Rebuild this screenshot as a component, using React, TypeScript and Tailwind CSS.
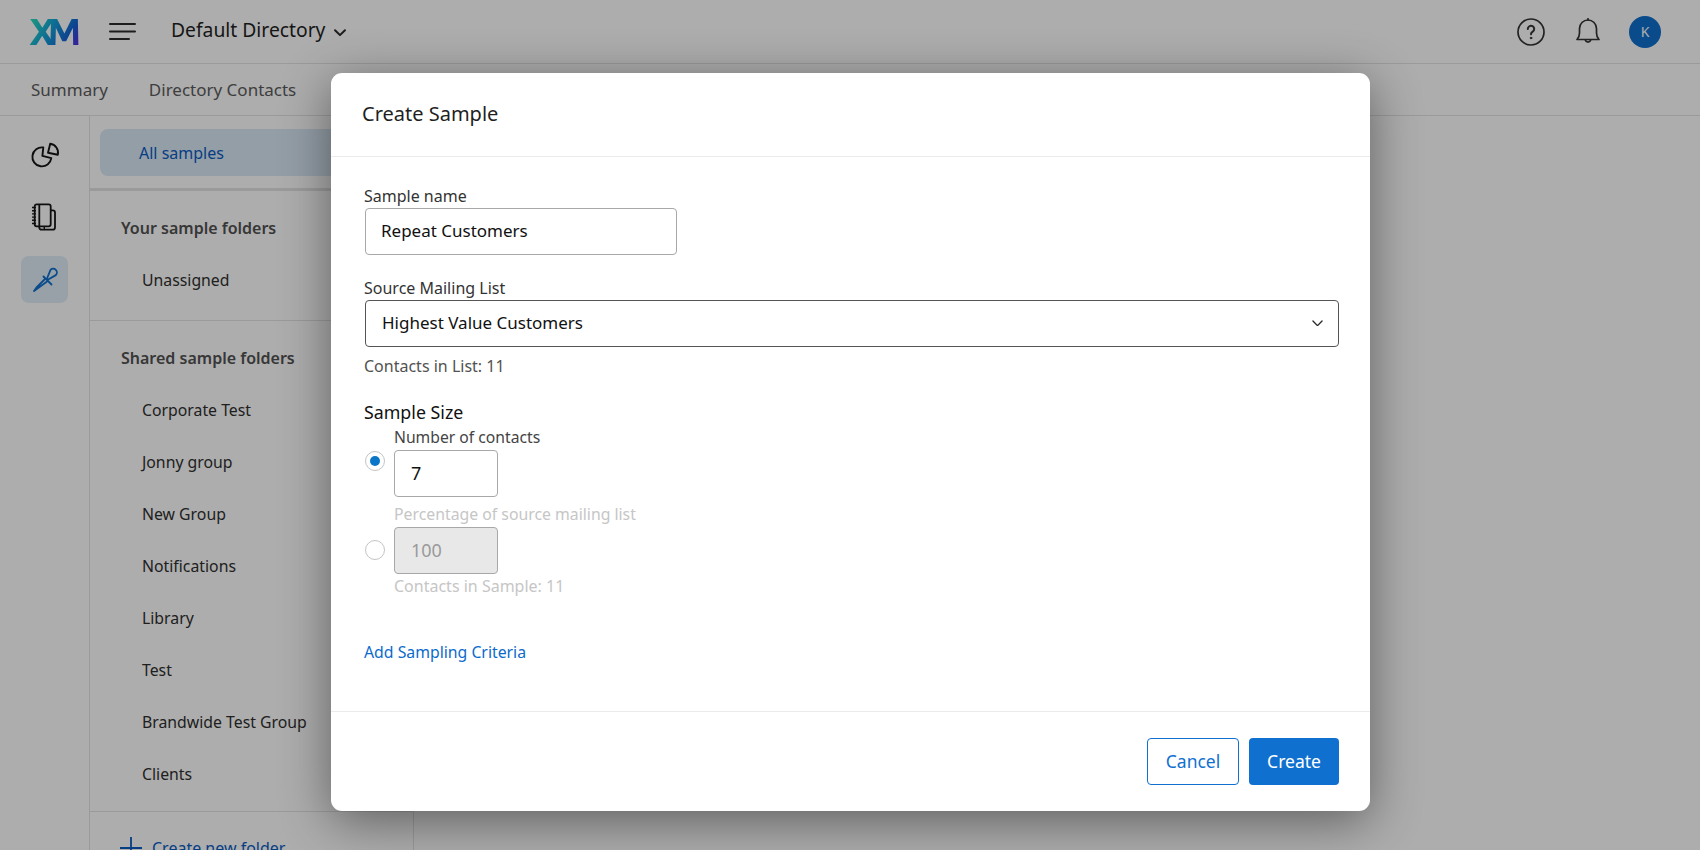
import React from "react";

const font = { fontFamily: '"Noto Sans", sans-serif' };

function Logo() {
  return (
    <svg width="50" height="28" viewBox="0 0 48 27" className="shrink-0 -ml-[1px]">
      <defs>
        <linearGradient id="lg" gradientUnits="userSpaceOnUse" x1="2" y1="0" x2="47" y2="27">
          <stop offset="0" stopColor="#2be0bc" />
          <stop offset="0.4" stopColor="#14a4d8" />
          <stop offset="0.75" stopColor="#1464d4" />
          <stop offset="1" stopColor="#5a2ae8" />
        </linearGradient>
      </defs>
      <polygon points="1,1 7.500,1 12.800,9.500 18,1 24,1 16,13.200 24.800,26 18,26 12.600,17.200 7,26 0.500,26 9.500,13.200" fill="url(#lg)" />
      <polygon points="21,1 27,1 34,15 41,1 47,1 47.500,26 42.500,26 42.200,9.500 35.700,22.500 32,22.500 25.800,9.500 25.400,26 20.500,26 21,8" fill="url(#lg)" />
    </svg>
  );
}

function Hamburger() {
  return (
    <svg width="27" height="19" viewBox="0 0 27 19" fill="none" stroke="#2b2b2b" strokeWidth="2" strokeLinecap="round">
      <path d="M1 2h25M1 9.500h25M1 17h19" />
    </svg>
  );
}

function PieIcon() {
  return (
    <svg width="40" height="40" viewBox="0 0 40 40" fill="none" stroke="#161616" strokeWidth="1.900" strokeLinejoin="round" className="-ml-[2px]">
      <path d="M19.300 13.500A9.500 9.500 0 1 0 27.300 24.200L18.400 21.800Z" />
      <path d="M26.200 9.800A9 9 0 0 1 33.800 20.700L24 18.700Z" />
    </svg>
  );
}

function NotebookIcon() {
  return (
    <svg width="40" height="40" viewBox="0 0 40 40" fill="none" stroke="#161616" strokeWidth="1.800" strokeLinejoin="round" className="-ml-[1px]">
      <rect x="10.700" y="7.300" width="16" height="22" rx="2" />
      <path d="M15.300 7.300v22" />
      <path d="M26.700 13.300h2.100a2.200 2.200 0 0 1 2.200 2.200v15a2.200 2.200 0 0 1-2.200 2.200H17.500a2.200 2.200 0 0 1-2.200-2.200v-1.200" />
      <path d="M20.300 29.300v3.400" strokeWidth="1.400" />
      <path d="M8 10.500h4M8 13.700h4M8 16.900h4M8 20.100h4M8 23.300h4M8 26.500h4" strokeWidth="1.400" />
    </svg>
  );
}

function DropperIcon() {
  return (
    <svg width="40" height="40" viewBox="0 0 40 40" fill="none" stroke="#0f6fcf" strokeWidth="1.800" strokeLinejoin="round" strokeLinecap="round">
      <path d="M18.500 16.500L26.500 24.500" />
      <path d="M22 18.500L25.500 9.800a3.600 3.600 0 0 1 5.300 5.300L22.800 19.800" />
      <path d="M20 19L11.500 27.500L9 31L12.500 28.500L22 21.500" />
    </svg>
  );
}

function HelpIcon() {
  return (
    <svg width="28" height="28" viewBox="0 0 28 28" fill="none" stroke="#333" strokeWidth="1.700" strokeLinecap="round">
      <circle cx="14" cy="14" r="13" />
      <path d="M10.800 11a3.200 3.200 0 1 1 4.900 2.700c-1.100.7-1.700 1.300-1.700 2.500" strokeWidth="2" />
      <circle cx="14" cy="20" r="0.800" fill="#333" strokeWidth="1" />
    </svg>
  );
}

function BellIcon() {
  return (
    <svg width="24" height="27" viewBox="0 0 24 27" fill="none" stroke="#333" strokeWidth="1.700" strokeLinejoin="round" strokeLinecap="round">
      <path d="M1 21.500h22c-1.800-1.800-2.500-3.500-2.500-6.500V10.500a8.500 8.500 0 0 0-17 0V15c0 3-.7 4.700-2.500 6.500z" />
      <path d="M12 .8v1.200" />
      <path d="M9.300 22a2.800 2.800 0 0 0 5.400 0" />
    </svg>
  );
}

function Chevron({ w = 12, sw = 2, color = "#2b2b2b" }: { w?: number; sw?: number; color?: string }) {
  return (
    <svg width={w} height={w * 0.62} viewBox="0 0 12 7.500" fill="none" stroke={color} strokeWidth={sw} strokeLinecap="round" strokeLinejoin="round">
      <path d="M1 1.200l5 5 5-5" />
    </svg>
  );
}

const folders = ["Corporate Test", "Jonny group", "New Group", "Notifications", "Library", "Test", "Brandwide Test Group", "Clients"];

function Row({ children }: { children: React.ReactNode }) {
  return <div className="h-[52px] flex items-center pl-[52px] text-[15.800px] text-[#2f2f2f]">{children}</div>;
}

function Heading({ children }: { children: React.ReactNode }) {
  return <div className="h-[52px] flex items-center pl-[31px] pb-[2px] text-[16px] font-semibold text-[#525252]">{children}</div>;
}

export default function App() {
  return (
    <div style={font} className="relative w-[1700px] h-[850px] overflow-hidden bg-white flex flex-col">
      <header className="h-[64px] shrink-0 border-b border-[#e3e3e3] flex items-center pl-[30px] pr-[39px]">
        <Logo />
        <div className="ml-[30px]"><Hamburger /></div>
        <div className="ml-[35px] mb-[2px] text-[19.300px] text-[#1f1f1f]">Default Directory</div>
        <div className="ml-[9px] mt-[3px]"><Chevron /></div>
        <div className="ml-auto flex items-center">
          <HelpIcon />
          <div className="ml-[31px]"><BellIcon /></div>
          <div className="ml-[29px] w-[32px] h-[32px] rounded-full bg-[#0f6fcf] flex items-center justify-center text-white text-[14px]">K</div>
        </div>
      </header>

      <nav className="h-[52px] shrink-0 border-b border-[#e3e3e3] flex items-center pl-[31px] gap-[41px] text-[17px] text-[#5c5c5c]">
        <span>Summary</span>
        <span>Directory Contacts</span>
      </nav>

      <div className="flex flex-1 min-h-0">
        <aside className="w-[90px] shrink-0 border-r border-[#e3e3e3] flex flex-col items-center">
          <div className="h-[76px] w-full flex items-center justify-center"><PieIcon /></div>
          <div className="h-[50px] w-full flex items-center justify-center"><NotebookIcon /></div>
          <div className="mt-[14px] w-[47px] h-[47px] rounded-lg bg-[#e1edf6] flex items-center justify-center"><DropperIcon /></div>
        </aside>

        <section className="w-[324px] shrink-0 border-r border-[#e3e3e3]">
          <div className="pt-[13px] pb-[12px] pl-[10px] border-b-[3px] border-[#e3e3e3]">
            <div className="h-[47px] w-[314px] rounded-l-lg bg-[#dbe9f7] flex items-center pl-[39px] text-[16px] text-[#0a5cc2]">All samples</div>
          </div>
          <div className="pt-[12px] pb-[13px] border-b border-[#e3e3e3]">
            <Heading>Your sample folders</Heading>
            <Row>Unassigned</Row>
          </div>
          <div className="pt-[12px] pb-[10px] border-b border-[#e3e3e3]">
            <Heading>Shared sample folders</Heading>
            {folders.map((f) => <Row key={f}>{f}</Row>)}
          </div>
          <div className="pt-[24px] pl-[30px] flex items-center gap-[10px] text-[16px] text-[#0a5cc2]">
            <svg width="22" height="22" viewBox="0 0 22 22" stroke="#0a5cc2" strokeWidth="1.800"><path d="M11 0v22M0 11h22" /></svg>
            <span>Create new folder</span>
          </div>
        </section>
        <main className="flex-1" />
      </div>

      <div className="absolute inset-0 bg-black/[0.32] pl-[331px] pt-[73px]">
        <div className="w-[1039px] h-[738px] bg-white rounded-[11px] shadow-[0_10px_50px_rgba(0,0,0,0.45)] flex flex-col">
          <div className="h-[84px] shrink-0 border-b border-[#ebebeb] flex items-center pl-[31px] pb-[2px] text-[20px] text-[#1f1f1f]">Create Sample</div>

          <div className="flex-1 min-h-0 pl-[34px] pr-[31px] pt-[27px] text-[16px]">
            <div className="h-[24px] leading-[24px] -ml-[1px] text-[#333]">Sample name</div>
            <div className="w-[312px] h-[47px] border-[1.5px] border-[#a8a8a8] rounded-[4px] flex items-center pl-[15px] pb-[1px] text-[17px] text-[#111]">Repeat Customers</div>

            <div className="h-[24px] leading-[24px] mt-[21px] -ml-[1px] text-[#333]">Source Mailing List</div>
            <div className="w-full h-[47px] border-[1.5px] border-[#555] rounded-[4px] flex items-center justify-between pl-[16px] pr-[15px] pb-[1px] text-[17px] text-[#111]">
              <span>Highest Value Customers</span>
              <Chevron w={11} sw={1.500} />
            </div>
            <div className="h-[24px] leading-[24px] mt-[7px] -ml-[1px] text-[#525252]">Contacts in List: 11</div>

            <div className="h-[24px] leading-[24px] mt-[22px] -ml-[1px] text-[17.800px] text-[#111]">Sample Size</div>

            <div className="flex">
              <div className="w-[29px] pt-[27px] shrink-0">
                <div className="w-[20px] h-[20px] rounded-full border-[1.5px] border-[#c4c4c4] flex items-center justify-center">
                  <div className="w-[10px] h-[10px] rounded-full bg-[#0b76c8]" />
                </div>
              </div>
              <div>
                <div className="h-[24px] leading-[24px] mt-[1px] text-[15.700px] text-[#444]">Number of contacts</div>
                <div className="mt-[1px] w-[104px] h-[47px] border-[1.5px] border-[#a8a8a8] rounded-[4px] flex items-center pl-[16px] text-[18px] text-[#111]">7</div>
              </div>
            </div>

            <div className="flex">
              <div className="w-[29px] pt-[43px] shrink-0">
                <div className="w-[20px] h-[20px] rounded-full border-[1.5px] border-[#c4c4c4] bg-white" />
              </div>
              <div>
                <div className="h-[24px] leading-[24px] mt-[5px] text-[15.800px] text-[#c6c6c6]">Percentage of source mailing list</div>
                <div className="mt-[1px] w-[104px] h-[47px] border-[1.5px] border-[#a8a8a8] bg-[#e8e8e8] rounded-[4px] flex items-center pl-[16px] text-[18px] text-[#9a9a9a]">100</div>
                <div className="h-[24px] leading-[24px] text-[#c6c6c6]">Contacts in Sample: 11</div>
              </div>
            </div>

            <div className="h-[24px] leading-[24px] mt-[42px] -ml-[1px] text-[15.800px] text-[#0b6bcb]">Add Sampling Criteria</div>
          </div>

          <div className="h-[100px] shrink-0 border-t border-[#ebebeb] flex items-start justify-end pt-[26px] pr-[31px] gap-[10px] text-[17.500px]">
            <div className="w-[92px] h-[47px] border-[1.5px] border-[#1070d0] rounded-[4px] flex items-center justify-center text-[#1070d0]">Cancel</div>
            <div className="w-[90px] h-[47px] bg-[#1070d0] rounded-[4px] flex items-center justify-center text-white">Create</div>
          </div>
        </div>
      </div>
    </div>
  );
}
